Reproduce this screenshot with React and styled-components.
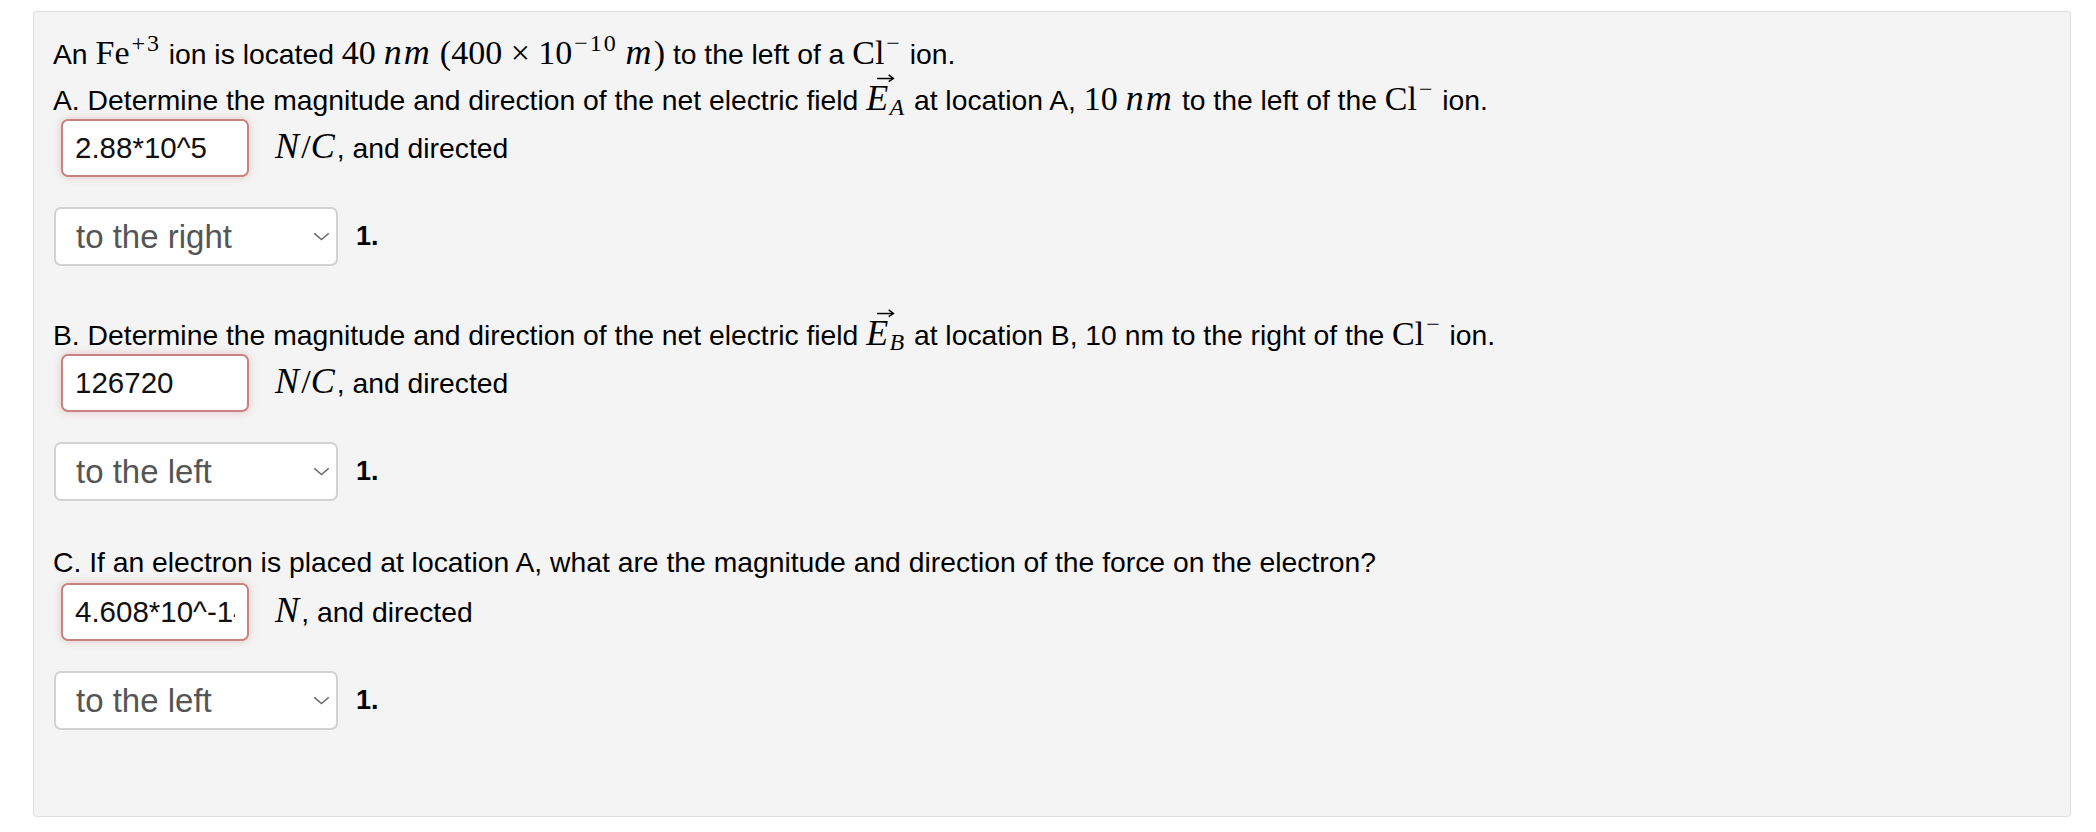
import React from "react";
import styled, { createGlobalStyle } from "styled-components";

const GlobalStyle = createGlobalStyle`
  html, body {
    margin: 0;
    padding: 0;
    background: #ffffff;
  }
  body {
    font-family: "Liberation Sans", Arial, sans-serif;
    color: #000;
  }
`;

export default function App() {
  return (
    <>
      <GlobalStyle />
      <Panel>
        <Line>
          An <M>Fe</M>
          <Sup>+3</Sup> ion is located <M>40</M> <M $it>nm</M>{" "}
          <M>(400 × 10</M>
          <Sup>−10</Sup> <M $it>m</M>
          <M>)</M> to the left of a <M>Cl</M>
          <Sup>−</Sup> ion.
        </Line>

        <Part
          $gap={14}
          question={
            <>
              A. Determine the magnitude and direction of the net electric field{" "}
              <Vector sub="A" /> at location A, <M>10</M> <M $it>nm</M> to the left of the <M>Cl</M>
              <Sup>−</Sup> ion.
            </>
          }
          value="2.88*10^5"
          unit={<><M $it>N</M><M>/</M><M $it>C</M></>}
          choice="to the right"
        />

        <Part
          $gap={51}
          question={
            <>
              B. Determine the magnitude and direction of the net electric field{" "}
              <Vector sub="B" /> at location B, 10 nm to the right of the <M>Cl</M>
              <Sup>−</Sup> ion.
            </>
          }
          value="126720"
          unit={<><M $it>N</M><M>/</M><M $it>C</M></>}
          choice="to the left"
        />

        <Part
          $gap={45}
          question={
            <>C. If an electron is placed at location A, what are the magnitude and direction of the force on the electron?</>
          }
          value="4.608*10^-14"
          unit={<M $it>N</M>}
          choice="to the left"
        />
      </Panel>
    </>
  );
}

function Part({ $gap, question, value, unit, choice }) {
  return (
    <>
      <Line $gap={$gap}>{question}</Line>
      <AnswerRow>
        <AnswerInput readOnly value={value} />
        <Unit>
          {unit}, and directed
        </Unit>
      </AnswerRow>
      <ChoiceRow>
        <SelectWrap>
          <Select value={choice} onChange={() => {}}>
            <option>?</option>
            <option>to the right</option>
            <option>to the left</option>
          </Select>
          <Chevron viewBox="0 0 18 10">
            <path d="M1 1.5 L9 8.5 L17 1.5" fill="none" stroke="#6b6b6b" strokeWidth="1.6" />
          </Chevron>
        </SelectWrap>
        <Mark>1.</Mark>
      </ChoiceRow>
    </>
  );
}

function Vector({ sub }) {
  return (
    <VecBox>
      <M $it>E</M>
      <Arrow viewBox="0 0 18 9">
        <path d="M1 5 H16" stroke="#000" strokeWidth="1.4" />
        <path d="M12 1.5 L16.5 5 L12 8" fill="none" stroke="#000" strokeWidth="1.4" />
      </Arrow>
      <Sub>{sub}</Sub>
    </VecBox>
  );
}

const Panel = styled.div`
  box-sizing: border-box;
  margin: 11px 0 0 33px;
  width: 2038px;
  height: 806px;
  background: #f4f4f4;
  border: 1px solid #dedede;
  border-radius: 4px;
  box-shadow: 0 0 1px rgba(0, 0, 0, 0.06);
  padding: 24px 20px 0 19px;
`;

const Line = styled.div`
  font-size: 28.3px;
  line-height: 32px;
  height: 32px;
  margin-top: ${(p) => p.$gap || 0}px;
  white-space: nowrap;
`;

const M = styled.span`
  font-family: "Liberation Serif", "Times New Roman", serif;
  font-size: ${(p) => (p.$it ? "36px" : "34px")};
  font-style: ${(p) => (p.$it ? "italic" : "normal")};
  letter-spacing: ${(p) => (p.$it ? "0.06em" : "0")};
`;

const Sup = styled.span`
  font-family: "Liberation Serif", "Times New Roman", serif;
  font-size: 24px;
  line-height: 0;
  vertical-align: 13px;
  margin-left: 2px;
  letter-spacing: 0.08em;
`;

const Sub = styled.span`
  font-family: "Liberation Serif", "Times New Roman", serif;
  font-style: italic;
  font-size: 24px;
  line-height: 0;
  vertical-align: -5px;
  margin-left: -1px;
  margin-right: 2px;
`;

const VecBox = styled.span`
  position: relative;
  display: inline-block;
  line-height: 32px;
`;

const Arrow = styled.svg`
  position: absolute;
  left: 10px;
  top: -9px;
  width: 19px;
  height: 10px;
`;

const AnswerRow = styled.div`
  display: flex;
  align-items: center;
  margin-top: 4px;
  padding-left: 8px;
  height: 59px;
`;

const AnswerInput = styled.input`
  box-sizing: border-box;
  width: 188px;
  height: 58px;
  padding: 0 12px;
  border: 2px solid #c98282;
  border-radius: 7px;
  background: #fff;
  box-shadow: 0 0 8px rgba(190, 90, 90, 0.3);
  font-family: "Liberation Sans", Arial, sans-serif;
  font-size: 29.5px;
  color: #111;
  outline: none;
`;

const Unit = styled.span`
  margin-left: 26px;
  font-size: 28.3px;
  padding-bottom: 4px;
`;

const ChoiceRow = styled.div`
  display: flex;
  align-items: center;
  margin-top: 30px;
  padding-left: 1px;
`;

const SelectWrap = styled.div`
  position: relative;
  width: 284px;
  height: 59px;
`;

const Select = styled.select`
  box-sizing: border-box;
  appearance: none;
  -webkit-appearance: none;
  width: 100%;
  height: 100%;
  padding: 0 40px 0 20px;
  border: 2px solid #d2d2d2;
  border-radius: 7px;
  background: #fff;
  font-family: "Liberation Sans", Arial, sans-serif;
  font-size: 33px;
  color: #555;
  outline: none;
`;

const Chevron = styled.svg`
  position: absolute;
  right: 8px;
  top: 25px;
  width: 17px;
  height: 9px;
  pointer-events: none;
`;

const Mark = styled.span`
  margin-left: 18px;
  font-size: 27px;
  font-weight: bold;
`;
